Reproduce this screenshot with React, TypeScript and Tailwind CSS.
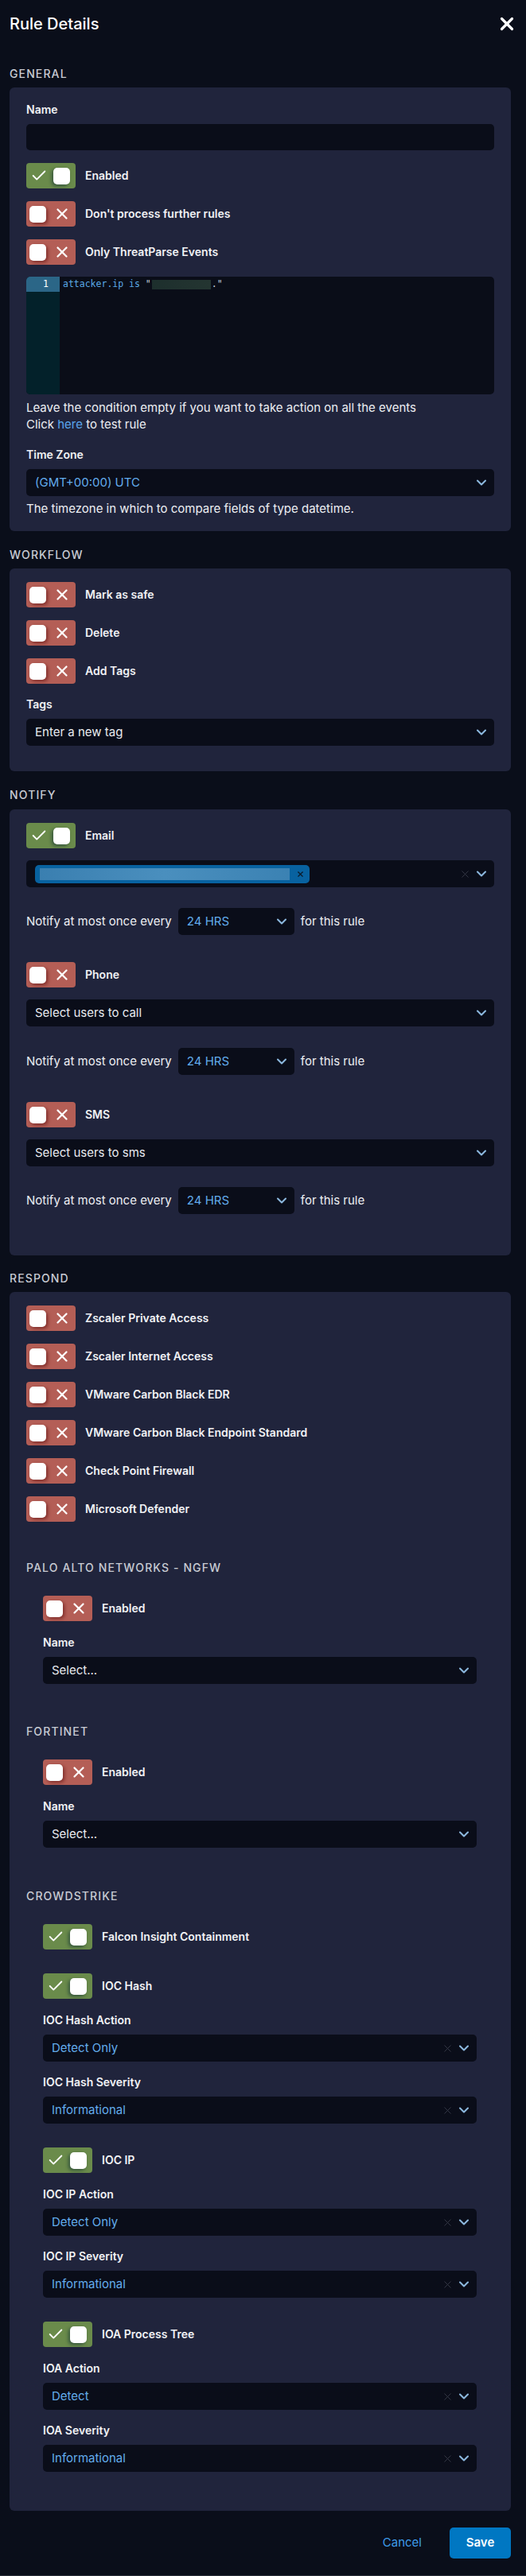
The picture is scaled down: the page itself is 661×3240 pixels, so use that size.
import { Check, ChevronDown, X } from "lucide-react";

type ToggleProps = { on?: boolean; label: string; className?: string };

const Toggle = ({ on, label, className = "" }: ToggleProps) => {
  return (
    <div className={`flex items-center gap-3 ${className}`}>
      {on ? (
        <div className="flex h-8 w-[62px] shrink-0 items-center rounded bg-[#6a8b4b] pl-[5px]">
          <Check size={22} strokeWidth={2} className="text-white" />
          <div className="ml-[7px] h-[21px] w-[21px] rounded-[5px] bg-white shadow-[-2px_2px_4px_rgba(10,40,50,0.55)]" />
        </div>
      ) : (
        <div className="flex h-8 w-[62px] shrink-0 items-center rounded bg-[#b45e56] pl-1">
          <div className="h-[21px] w-[21px] rounded-[5px] bg-white shadow-[2px_2px_4px_rgba(90,10,10,0.6)]" />
          <X size={22} strokeWidth={2.5} className="ml-[9px] text-white" />
        </div>
      )}
      <span className="text-sm font-semibold text-[#f1f2f5]">{label}</span>
    </div>
  );
};

type SelectProps = {
  value?: string;
  placeholder?: string;
  clear?: boolean;
  className?: string;
  children?: React.ReactNode;
};

const Select = ({ value, placeholder, clear, className = "", children }: SelectProps) => {
  return (
    <div className={`flex h-[34px] items-center rounded-[5px] bg-[#0a0d19] pl-[11px] pr-[6px] ${className}`}>
      <div className="flex flex-1 items-center">
        {children ?? (
          <span className={`text-[15px] ${value ? "text-[#62acec]" : "text-[#e8eaef]"}`}>{value ?? placeholder}</span>
        )}
      </div>
      {clear && <X size={15} strokeWidth={1.5} className="mr-[3px] text-[#363a47]" />}
      <ChevronDown size={20} strokeWidth={2.5} className="text-[#8db9df]" />
    </div>
  );
};

const Label = ({ children, className = "" }: { children: React.ReactNode; className?: string }) => (
  <div className={`h-5 text-sm font-semibold leading-5 text-[#f1f2f5] ${className}`}>{children}</div>
);

const Heading = ({ children, className = "" }: { children: React.ReactNode; className?: string }) => (
  <h2 className={`h-5 text-sm font-medium uppercase leading-5 tracking-[0.08em] text-[#c8cbd3] ${className}`}>
    {children}
  </h2>
);

const NotifyRow = ({ className = "" }: { className?: string }) => (
  <div className={`flex items-center text-[15px] text-[#eceef2] ${className}`}>
    <span>Notify at most once every</span>
    <Select value="24 HRS" className="mx-2 w-[146px]" />
    <span>for this rule</span>
  </div>
);

export default function App() {
  return (
    <div className="min-h-[3240px] w-full bg-[#0a0e1a] pl-3 pr-[19px] font-['Inter',sans-serif] text-white">
      {/* header */}
      <div className="flex h-[60px] items-center justify-between">
        <h1 className="text-xl font-medium">Rule Details</h1>
        <X size={26} strokeWidth={3} className="-mr-2 text-white" />
      </div>

      {/* GENERAL */}
      <Heading className="mt-[23px]">General</Heading>
      <div className="mt-[7px] rounded-md bg-[#20243c] px-[21px] pb-[18px] pt-[18px]">
        <Label>Name</Label>
        <div className="mt-2 h-[33px] rounded-[5px] bg-[#0a0d19]" />
        <Toggle on label="Enabled" className="mt-4" />
        <Toggle label="Don't process further rules" className="mt-4" />
        <Toggle label="Only ThreatParse Events" className="mt-4" />

        <div className="mt-[15px] flex h-[148px] overflow-hidden rounded-[5px] bg-[#0a0d18]">
          <div className="w-[42px] shrink-0 bg-[#03212a]">
            <div className="h-[19px] bg-[#2b6687] pr-[14px] text-right font-['DejaVu_Sans_Mono',monospace] text-[11.5px] leading-[19px] text-white">
              1
            </div>
          </div>
          <div className="flex h-[19px] items-center pl-1 font-['DejaVu_Sans_Mono',monospace] text-[11.5px] leading-[19px] text-[#5aa8e6]">
            <span className="whitespace-pre">attacker.ip is </span>
            <span className="text-[#c9d1dc]">"</span>
            <span className="mx-px h-3 w-[74px] bg-gradient-to-r from-[#1d2f2d] to-[#243531]" />
            <span className="text-[#c9d1dc]">."</span>
          </div>
        </div>

        <p className="mt-[6px] text-[15px] leading-[21px] text-[#eceef2]">
          Leave the condition empty if you want to take action on all the events
        </p>
        <p className="text-[15px] leading-[21px] text-[#eceef2]">
          Click <span className="text-[#5aa6ec]">here</span> to test rule
        </p>

        <Label className="mt-[18px]">Time Zone</Label>
        <Select value="(GMT+00:00) UTC" className="mt-2" />
        <p className="mt-[6px] text-[15px] leading-5 text-[#eceef2]">
          The timezone in which to compare fields of type datetime.
        </p>
      </div>

      {/* WORKFLOW */}
      <Heading className="mt-5">Workflow</Heading>
      <div className="mt-[7px] rounded-md bg-[#20243c] px-[21px] pb-8 pt-[17px]">
        <Toggle label="Mark as safe" />
        <Toggle label="Delete" className="mt-4" />
        <Toggle label="Add Tags" className="mt-4" />
        <Label className="mt-4">Tags</Label>
        <Select placeholder="Enter a new tag" className="mt-2 h-[33px]" />
      </div>

      {/* NOTIFY */}
      <Heading className="mt-5">Notify</Heading>
      <div className="mt-2 rounded-md bg-[#20243c] px-[21px] pb-[52px] pt-[17px]">
        <Toggle on label="Email" />
        <Select clear className="mt-[15px]">
          <div className="flex h-[23px] w-[345px] items-center rounded-[5px] bg-[#0862a0] pl-[6px]">
            <div className="h-[15px] w-[314px] bg-gradient-to-r from-[#3a7fb0] via-[#4a8fbe] to-[#3b82b3]" />
            <X size={11} strokeWidth={2.5} className="ml-[8px] text-[#0c1a28]" />
          </div>
        </Select>
        <NotifyRow className="mt-[26px]" />

        <Toggle label="Phone" className="mt-[34px]" />
        <Select placeholder="Select users to call" className="mt-[15px]" />
        <NotifyRow className="mt-[27px]" />

        <Toggle label="SMS" className="mt-[34px]" />
        <Select placeholder="Select users to sms" className="mt-[15px]" />
        <NotifyRow className="mt-[26px]" />
      </div>

      {/* RESPOND */}
      <Heading className="mt-[19px]">Respond</Heading>
      <div className="mt-[7px] rounded-md bg-[#20243c] px-[21px] pb-[49px] pt-[17px]">
        <Toggle label="Zscaler Private Access" />
        <Toggle label="Zscaler Internet Access" className="mt-4" />
        <Toggle label="VMware Carbon Black EDR" className="mt-4" />
        <Toggle label="VMware Carbon Black Endpoint Standard" className="mt-4" />
        <Toggle label="Check Point Firewall" className="mt-4" />
        <Toggle label="Microsoft Defender" className="mt-4" />

        <Heading className="mt-[48px]">Palo Alto Networks - NGFW</Heading>
        <div className="pl-[21px] pr-[22px]">
          <Toggle label="Enabled" className="mt-[25px]" />
          <Label className="mt-[17px]">Name</Label>
          <Select placeholder="Select..." className="mt-2" />
        </div>

        <Heading className="mt-[50px]">Fortinet</Heading>
        <div className="pl-[21px] pr-[22px]">
          <Toggle label="Enabled" className="mt-[25px]" />
          <Label className="mt-[17px]">Name</Label>
          <Select placeholder="Select..." className="mt-2" />
        </div>

        <Heading className="mt-[51px]">Crowdstrike</Heading>
        <div className="pl-[21px] pr-[22px]">
          <Toggle on label="Falcon Insight Containment" className="mt-[25px]" />

          <Toggle on label="IOC Hash" className="mt-[30px]" />
          <Label className="mt-[17px]">IOC Hash Action</Label>
          <Select value="Detect Only" clear className="mt-2" />
          <Label className="mt-4">IOC Hash Severity</Label>
          <Select value="Informational" clear className="mt-2" />

          <Toggle on label="IOC IP" className="mt-[30px]" />
          <Label className="mt-[17px]">IOC IP Action</Label>
          <Select value="Detect Only" clear className="mt-2" />
          <Label className="mt-4">IOC IP Severity</Label>
          <Select value="Informational" clear className="mt-2" />

          <Toggle on label="IOA Process Tree" className="mt-[30px]" />
          <Label className="mt-[17px]">IOA Action</Label>
          <Select value="Detect" clear className="mt-2" />
          <Label className="mt-4">IOA Severity</Label>
          <Select value="Informational" clear className="mt-2" />
        </div>
      </div>

      {/* footer */}
      <div className="mt-[21px] flex items-center justify-end gap-[35px]">
        <button className="text-[15px] text-[#3d9be9]">Cancel</button>
        <button className="h-[39px] w-[77px] rounded-[5px] bg-[#0077c2] text-[15px] font-semibold text-white">Save</button>
      </div>
      <div className="h-[21px]" />
      <div className="-ml-3 -mr-[19px] h-[2px] bg-[#2a2e39]" />
    </div>
  );
}
